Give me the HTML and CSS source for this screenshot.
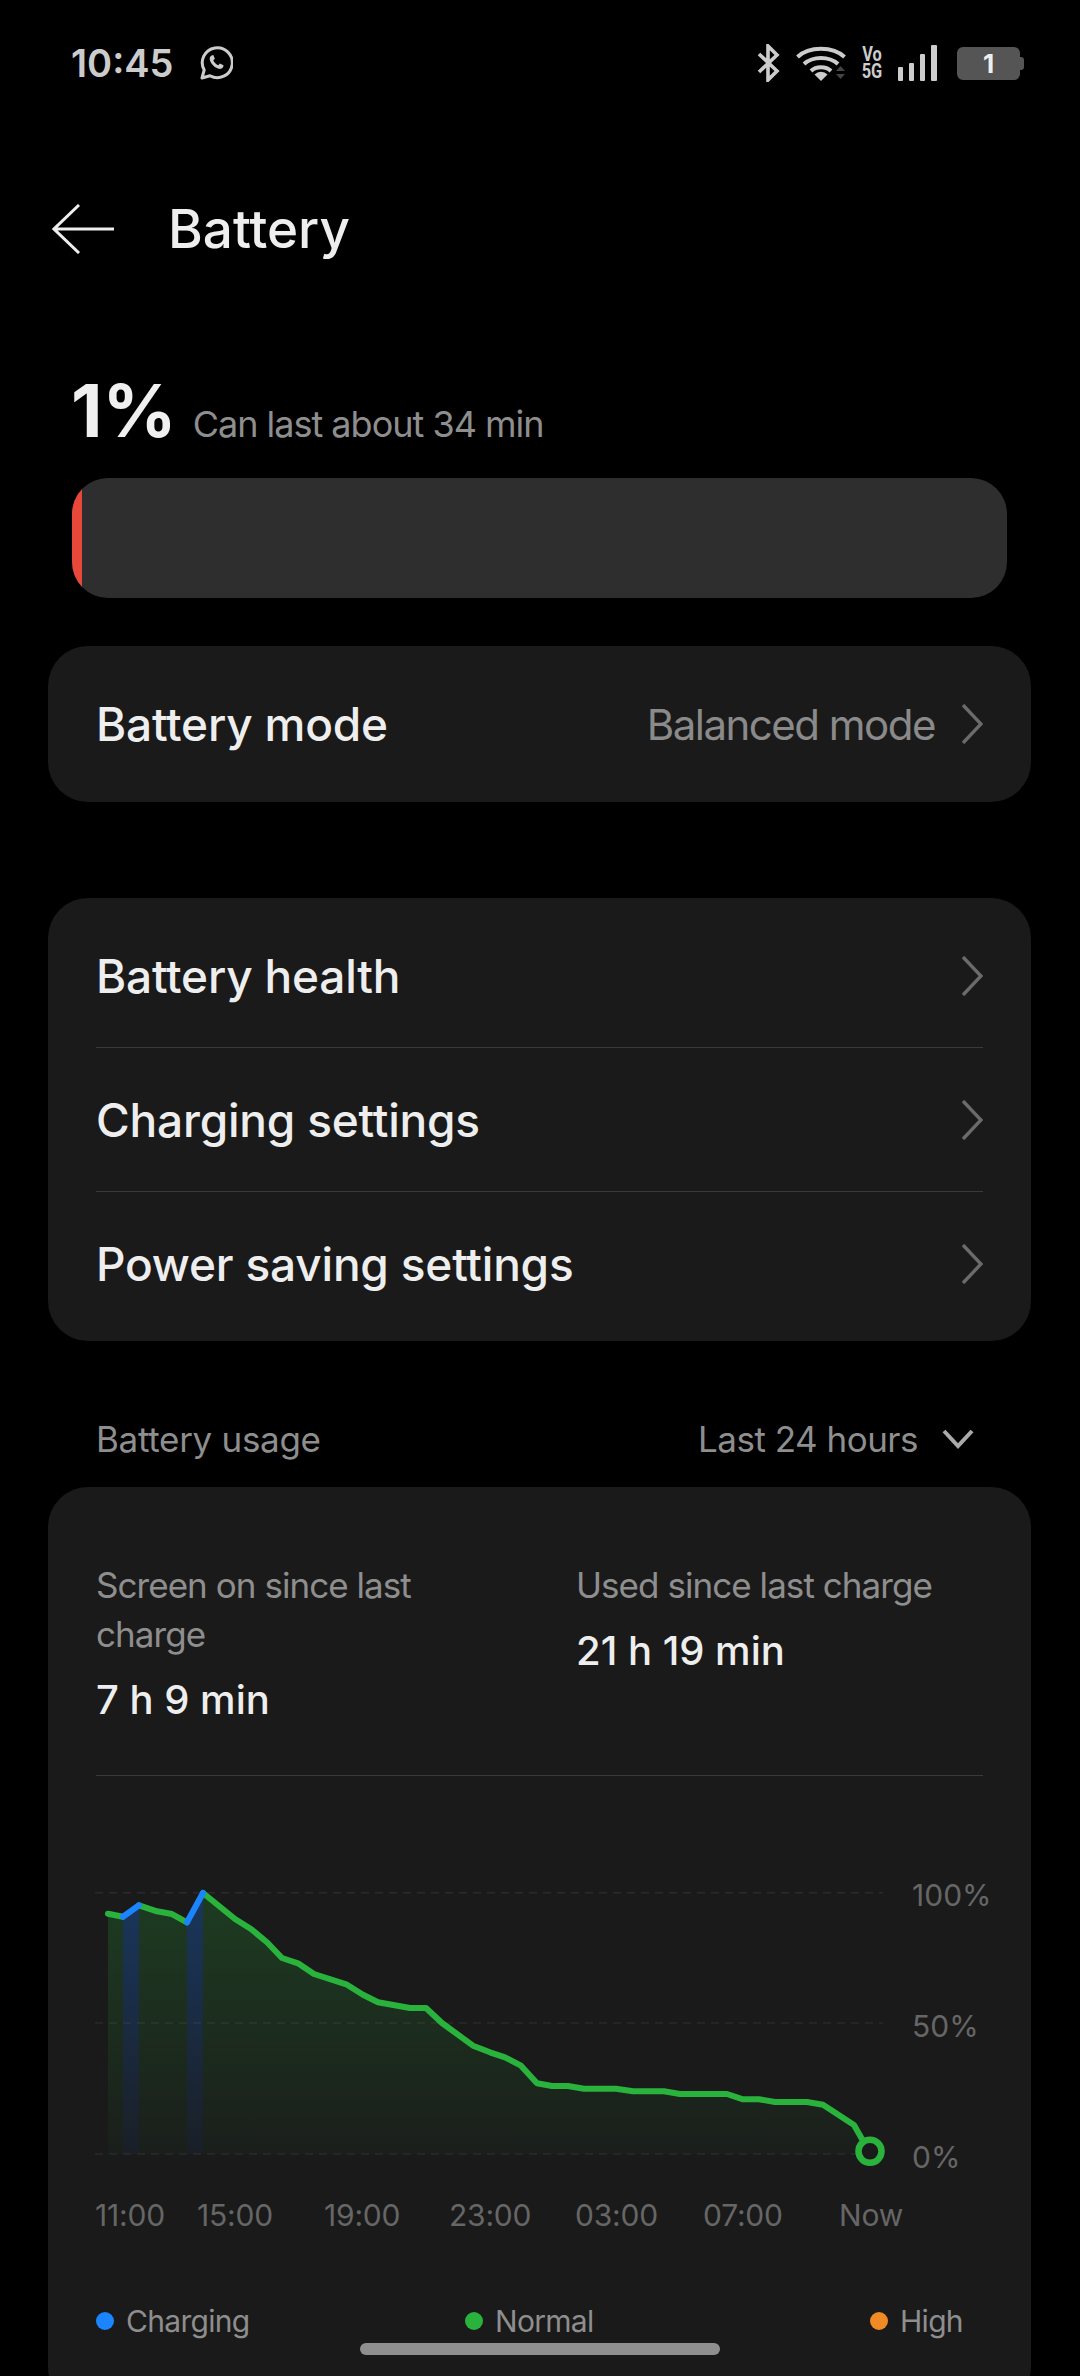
FILE: index.html
```html
<!DOCTYPE html>
<html lang="en">
<head>
    <meta charset="UTF-8">
    <meta name="viewport" content="width=device-width, initial-scale=1.0">
    <title>Battery</title>
    <link rel="stylesheet" href="styles.css">
</head>
<body>
    <div class="page">
        <div class="status-bar">
            <span class="clock">10:45</span>
            <svg class="wa-icon" width="34" height="34" viewBox="0 0 34 34" fill="none">
                <path d="M3 32l2.2-8A15 15 0 1 1 11 29.8z" stroke="#ccc" stroke-width="3" stroke-linejoin="round"/>
                <path d="M12.6 9.6c-1.4.7-2.3 2.4-1.7 4.6 1 3.6 5 7.6 8.8 8.6 2.2.5 4-.5 4.6-2l.2-1.6-3.6-1.8-1.6 1.9c-2.2-.8-4-2.7-5-5l1.6-1.6-1.6-3.6z" fill="#ccc"/>
            </svg>
            <div class="status-icons">
                <svg width="23" height="38" viewBox="0 0 23 38" fill="none">
                    <path d="M2 10l18 17-9 9V2l9 9L2 28" stroke="#ccc" stroke-width="3.6"/>
                </svg>
                <svg class="wifi" width="50" height="36" viewBox="0 0 50 36" fill="none">
                    <path d="M1.500 12C13 1 37 1 48.500 12" stroke="#ccc" stroke-width="4"/>
                    <path d="M8 19C17 11 33 11 42 19" stroke="#ccc" stroke-width="4"/>
                    <path d="M15 26C20 21 30 21 35 26" stroke="#ccc" stroke-width="4"/>
                    <path d="M18.500 29.500a9 9 0 0 1 13 0L25 36z" fill="#ccc"/>
                    <path d="M40 26l4.500-5 4.500 5zM40 29l4.500 5 4.500-5z" fill="#444"/>
                </svg>
                <div class="net-type"><span>Vo</span><span>5G</span></div>
                <svg class="signal" width="39" height="36" viewBox="0 0 39 36">
                    <rect x="0" y="22" width="5" height="14" rx="1" fill="#ccc"/>
                    <rect x="11" y="18" width="5" height="18" rx="1" fill="#ccc"/>
                    <rect x="22" y="9" width="5" height="27" rx="1" fill="#ccc"/>
                    <rect x="33" y="0" width="6" height="36" rx="1" fill="#ccc"/>
                </svg>
                <div class="batt-icon"><span>1</span></div>
            </div>
        </div>

        <div class="app-bar">
            <svg width="62" height="50" viewBox="0 0 62 50" fill="none">
                <path d="M27 1L2 25l25 24M2 25h60" stroke="#eee" stroke-width="3"/>
            </svg>
            <h1>Battery</h1>
        </div>

        <div class="summary">
            <span class="percent">1%</span>
            <span class="estimate">Can last about 34 min</span>
        </div>
        <div class="level-bar"><div class="level-fill"></div></div>

        <div class="card mode-card">
            <div class="row">
                <span class="row-title">Battery mode</span>
                <span class="row-value">Balanced mode</span>
                <svg class="chevron" width="24" height="40" viewBox="0 0 24 40" fill="none"><path d="M4 1l18 19L4 39" stroke="#6b6b6b" stroke-width="3.4"/></svg>
            </div>
        </div>

        <div class="card list-card">
            <div class="row">
                <span class="row-title">Battery health</span>
                <svg class="chevron" width="24" height="40" viewBox="0 0 24 40" fill="none"><path d="M4 1l18 19L4 39" stroke="#6b6b6b" stroke-width="3.4"/></svg>
            </div>
            <div class="row">
                <span class="row-title">Charging settings</span>
                <svg class="chevron" width="24" height="40" viewBox="0 0 24 40" fill="none"><path d="M4 1l18 19L4 39" stroke="#6b6b6b" stroke-width="3.4"/></svg>
            </div>
            <div class="row">
                <span class="row-title">Power saving settings</span>
                <svg class="chevron" width="24" height="40" viewBox="0 0 24 40" fill="none"><path d="M4 1l18 19L4 39" stroke="#6b6b6b" stroke-width="3.4"/></svg>
            </div>
        </div>

        <div class="usage-head">
            <span class="usage-title">Battery usage</span>
            <span class="range">Last 24 hours</span>
            <svg width="32" height="20" viewBox="0 0 32 20" fill="none"><path d="M2 2l14 15L30 2" stroke="#aaa" stroke-width="4"/></svg>
        </div>

        <div class="card usage-card">
            <div class="usage-stats">
                <div>
                    <div class="stat-label">Screen on since last charge</div>
                    <div class="stat-value">7 h 9 min</div>
                </div>
                <div>
                    <div class="stat-label">Used since last charge</div>
                    <div class="stat-value">21 h 19 min</div>
                </div>
            </div>

            <svg class="chart" width="983" height="380" viewBox="48 1860 983 380">
                <defs>
                    <linearGradient id="greenFade" x1="0" y1="0" x2="0" y2="1">
                        <stop offset="0" stop-color="#29b33d" stop-opacity="0.22"/>
                        <stop offset="1" stop-color="#29b33d" stop-opacity="0.03"/>
                    </linearGradient>
                    <linearGradient id="blueFade" x1="0" y1="0" x2="0" y2="1">
                        <stop offset="0" stop-color="#1a6fe0" stop-opacity="0.34"/>
                        <stop offset="1" stop-color="#1a6fe0" stop-opacity="0.06"/>
                    </linearGradient>
                </defs>
                <path class="grid" d="M95 1893.700H883M95 2024H883M95 2155H883"/>
                <path fill="url(#greenFade)" d="M108 2155V1914.700L123 1917.700V2155ZM139 2155V1906.300L157 1912.300 172 1915 187 1923.300V2155ZM203 2155V1894L235 1920 251 1930 267 1943.300 282 1959 298 1964.300 314 1975 347 1985.700 363 1995.700 378 2003.300 410 2009 426 2009 442 2024 473 2046.700 490 2053.300 505 2058.300 521 2066.700 537 2084.300 552 2087 568 2087 584 2089.700 616 2089.700 633 2092.300 664 2092.300 680 2095 727 2095 743 2100.300 759 2100.300 775 2103 807 2103 823 2105.700 854 2126 862 2140 869 2155Z"/>
                <path fill="url(#blueFade)" d="M123 2155V1917.700L139 1906.300V2155ZM187 2155V1923.300L203 1894V2155Z"/>
                <path class="line-normal" d="M108 1914.700L123 1917.700M139 1906.300L157 1912.300 172 1915 187 1923.300M203 1894L235 1920 251 1930 267 1943.300 282 1959 298 1964.300 314 1975 347 1985.700 363 1995.700 378 2003.300 410 2009 426 2009 442 2024 473 2046.700 490 2053.300 505 2058.300 521 2066.700 537 2084.300 552 2087 568 2087 584 2089.700 616 2089.700 633 2092.300 664 2092.300 680 2095 727 2095 743 2100.300 759 2100.300 775 2103 807 2103 823 2105.700 854 2126 862 2140"/>
                <path class="line-charge" d="M123 1917.700L139 1906.300M187 1923.300L203 1894"/>
                <circle class="now-dot" cx="870" cy="2152.300" r="11.500"/>
                <text class="pct" x="912" y="1907">100%</text>
                <text class="pct" x="912" y="2038">50%</text>
                <text class="pct" x="912" y="2169">0%</text>
                <text class="tick" x="95" y="2227">11:00</text>
                <text class="tick" x="197" y="2227">15:00</text>
                <text class="tick" x="324" y="2227">19:00</text>
                <text class="tick" x="449" y="2227">23:00</text>
                <text class="tick" x="575" y="2227">03:00</text>
                <text class="tick" x="703" y="2227">07:00</text>
                <text class="tick" x="839" y="2227">Now</text>
            </svg>

            <div class="legend">
                <div class="legend-item"><i class="dot dot-blue"></i>Charging</div>
                <div class="legend-item"><i class="dot dot-green"></i>Normal</div>
                <div class="legend-item"><i class="dot dot-orange"></i>High</div>
            </div>
        </div>

        <div class="home-bar"></div>
    </div>
</body>
</html>
```

FILE: styles.css
```css
* {
    box-sizing: border-box;
}
body {
    margin: 0;
    background: #000;
    font-family: Inter, "Noto Sans", sans-serif;
}
.page {
    position: relative;
    width: 1080px;
    height: 2376px;
    overflow: hidden;
    background: #000;
    padding-top: 42px;
}
.status-bar {
    display: flex;
    align-items: center;
    height: 42px;
    padding: 0 57px 0 71px;
}
.clock {
    color: #ccc;
    font-size: 38px;
    font-weight: 600;
    width: 128px;
}
.status-icons {
    margin-left: auto;
    display: flex;
    align-items: center;
    gap: 16px;
}
.net-type {
    display: flex;
    flex-direction: column;
    align-items: center;
    width: 20px;
    color: #ccc;
    font-family: Roboto, sans-serif;
    font-size: 21px;
    font-weight: 700;
    line-height: 17px;
    transform: scaleX(0.78);
}
.batt-icon {
    position: relative;
    width: 63px;
    height: 33px;
    margin-left: 4px;
    margin-right: 3px;
    border-radius: 6px;
    background: #555;
    color: #eee;
    font-size: 26px;
    font-weight: 700;
    line-height: 33px;
    text-align: center;
}
.batt-icon::after {
    content: "";
    position: absolute;
    right: -4px;
    top: 10px;
    width: 4px;
    height: 13px;
    border-radius: 0 3px 3px 0;
    background: #555;
}
.app-bar {
    display: flex;
    align-items: center;
    gap: 54px;
    height: 88px;
    margin-top: 101px;
    padding-left: 52px;
}
.app-bar h1 {
    margin: 0;
    color: #eee;
    font-size: 53px;
    font-weight: 500;
}
.summary {
    display: flex;
    align-items: baseline;
    gap: 16px;
    height: 88px;
    margin-top: 94px;
    padding-left: 71px;
}
.percent {
    color: #f0f0f0;
    font-size: 73px;
    font-weight: 700;
    line-height: 88px;
}
.estimate {
    color: #8e8e8e;
    font-size: 36px;
    letter-spacing: -1px;
}
.level-bar {
    width: 935px;
    height: 120px;
    margin: 23px 0 0 72px;
    border-radius: 36px;
    background: #2e2e2e;
    overflow: hidden;
}
.level-fill {
    width: 10px;
    height: 100%;
    background: #e8483a;
}
.card {
    width: 983px;
    margin-left: 48px;
    border-radius: 40px;
    background: #1a1a1a;
}
.mode-card {
    margin-top: 48px;
}
.list-card {
    margin-top: 96px;
    padding: 6px 0;
}
.row {
    display: flex;
    align-items: center;
    height: 156px;
    margin: 0 48px;
}
.list-card .row {
    height: 144px;
    border-top: 1px solid #3a3a3a;
}
.list-card .row:first-child {
    height: 143px;
    border-top: 0;
}
.row-title {
    color: #eee;
    font-size: 46px;
    font-weight: 500;
    letter-spacing: -0.2px;
}
.row-value {
    margin-left: auto;
    color: #8a8a8a;
    font-size: 42px;
    letter-spacing: -1.5px;
}
.chevron {
    flex: none;
    margin-left: auto;
}
.row-value + .chevron {
    margin-left: 24px;
}
.usage-head {
    display: flex;
    align-items: center;
    height: 60px;
    margin-top: 68px;
    padding: 0 106px 0 96px;
    color: #8e8e8e;
    font-size: 35px;
}
.usage-title {
    letter-spacing: -0.3px;
}
.range {
    margin-left: auto;
    margin-right: 24px;
    letter-spacing: -0.5px;
}
.usage-card {
    height: 920px;
    margin-top: 18px;
}
.usage-stats {
    display: grid;
    grid-template-columns: 480px 1fr;
    height: 289px;
    margin: 0 48px;
    padding-top: 74px;
    border-bottom: 1px solid #3a3a3a;
}
.stat-label {
    max-width: 380px;
    color: #8e8e8e;
    font-size: 35px;
    letter-spacing: -0.95px;
    line-height: 49px;
}
.stat-value {
    margin-top: 17px;
    color: #eee;
    font-size: 40px;
    font-weight: 500;
    line-height: 48px;
}
.chart {
    display: block;
    margin-top: 83px;
}
.grid {
    fill: none;
    stroke: #2a2a2a;
    stroke-width: 1.5;
    stroke-dasharray: 8 6;
}
.line-normal, .line-charge {
    fill: none;
    stroke-width: 6;
    stroke-linejoin: round;
    stroke-linecap: round;
}
.line-normal {
    stroke: #29b33d;
}
.line-charge {
    stroke: #1a85ff;
}
.now-dot {
    fill: #1a1a1a;
    stroke: #29b33d;
    stroke-width: 6.500;
}
.pct, .tick {
    fill: #666;
    font-size: 30px;
}
.tick {
    letter-spacing: -0.2px;
}
.legend {
    display: flex;
    margin: 64px 0 0 48px;
}
.legend-item {
    display: flex;
    align-items: center;
    gap: 12px;
    color: #8e8e8e;
    font-size: 30px;
    letter-spacing: -0.7px;
}
.legend-item:nth-child(1) {
    width: 369px;
}
.legend-item:nth-child(2) {
    width: 405px;
}
.dot {
    width: 18px;
    height: 18px;
    border-radius: 50%;
}
.dot-blue {
    background: #1a85ff;
}
.dot-green {
    background: #29b33d;
}
.dot-orange {
    background: #f08a24;
}
.home-bar {
    position: absolute;
    left: 360px;
    top: 2343px;
    width: 360px;
    height: 12px;
    border-radius: 6px;
    background: #8f8f8f;
}
```
